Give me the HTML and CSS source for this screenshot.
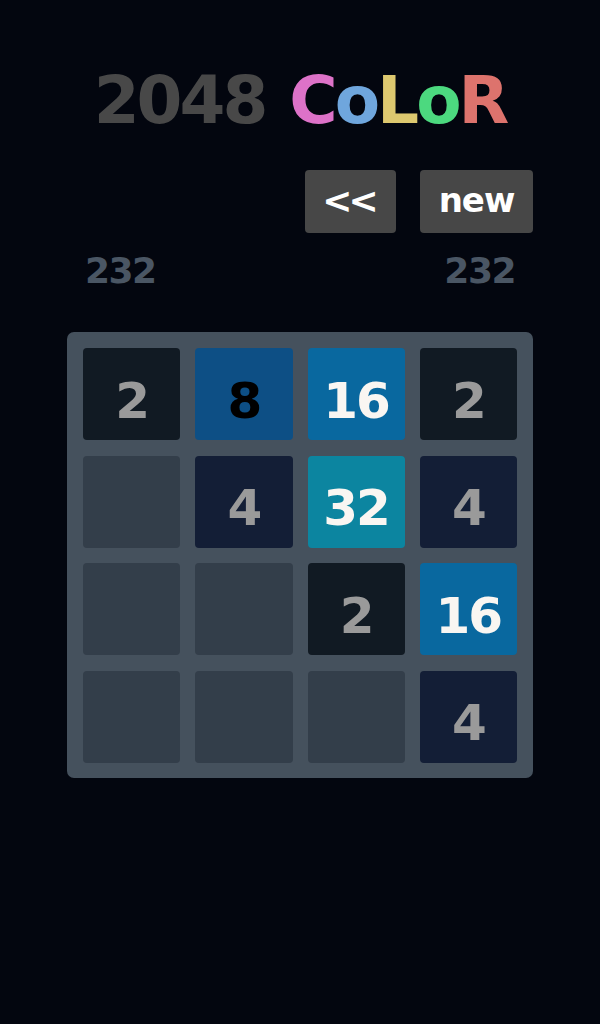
FILE: index.html
```html
<!DOCTYPE html>
<html lang="en">
<head>
<meta charset="utf-8">
<title>2048 CoLoR</title>
<link rel="stylesheet" href="styles.css">
</head>
<body>
<main class="game">
  <h1 class="title"><span class="num">2048</span> <span class="c1">C</span><span class="c2">o</span><span class="c3">L</span><span class="c4">o</span><span class="c5">R</span></h1>
  <div class="controls">
    <button class="btn btn-undo">&lt;&lt;</button>
    <button class="btn btn-new">new</button>
  </div>
  <div class="scores">
    <span class="score">232</span>
    <span class="score">232</span>
  </div>
  <div class="board">
    <div class="tile t2">2</div>
    <div class="tile t8">8</div>
    <div class="tile t16">16</div>
    <div class="tile t2">2</div>

    <div class="tile empty"></div>
    <div class="tile t4">4</div>
    <div class="tile t32">32</div>
    <div class="tile t4">4</div>

    <div class="tile empty"></div>
    <div class="tile empty"></div>
    <div class="tile t2">2</div>
    <div class="tile t16">16</div>

    <div class="tile empty"></div>
    <div class="tile empty"></div>
    <div class="tile empty"></div>
    <div class="tile t4">4</div>
  </div>
</main>
</body>
</html>
```
FILE: styles.css
```css
html, body {
  margin: 0;
  padding: 0;
  background: #03060f;
  height: 100%;
}

body {
  font-family: "DejaVu Sans", "Open Sans", sans-serif;
  font-weight: 700;
}

.game {
  width: 466px;
  margin: 0 auto;
  padding-top: 60px;
}

.title {
  margin: 0;
  text-align: center;
  font-size: 66px;
  line-height: 82px;
  font-weight: 700;
  letter-spacing: -3px;
  white-space: nowrap;
}

.title .num { color: #484848; margin-right: 4px; }
.title .c1 { color: #dd72c8; }
.title .c2 { color: #6fa6dd; }
.title .c3 { color: #ddc86f; }
.title .c4 { color: #4cd97f; }
.title .c5 { color: #dd736d; }

.controls {
  display: flex;
  justify-content: flex-end;
  gap: 24px;
  margin-top: 28px;
}

.btn {
  height: 63px;
  border: none;
  border-radius: 4px;
  background: #474747;
  color: #ffffff;
  font-family: "DejaVu Sans", "Open Sans", sans-serif;
  font-weight: 700;
  font-size: 34px;
  line-height: 1;
  padding: 0 0 2px;
}

.btn-undo { width: 91px; font-size: 36px; letter-spacing: -4px; padding-right: 4px; }
.btn-new { width: 113px; letter-spacing: -1px; padding-bottom: 4px; }

.scores {
  display: flex;
  justify-content: space-between;
  padding: 0 18px;
  margin-top: 14px;
}

.score {
  color: #4a5664;
  font-size: 36px;
  line-height: 48px;
  letter-spacing: -1.5px;
}

.board {
  margin-top: 37px;
  background: #45515d;
  border-radius: 7px;
  padding: 16px 16px 15px;
  display: grid;
  grid-template-columns: repeat(4, 1fr);
  grid-auto-rows: 92px;
  column-gap: 15px;
  row-gap: 15.67px;
}

.tile {
  border-radius: 4px;
  display: flex;
  align-items: center;
  justify-content: center;
  font-size: 50px;
  line-height: 1;
  padding-top: 13px;
  letter-spacing: -2px;
}

.empty { background: #333e4a; }
.t2 { background: #111a23; color: #9a9a9a; }
.t4 { background: #131e36; color: #9a9a9a; }
.t8 { background: #0d4f85; color: #000000; }
.t16 { background: #09689f; color: #f9f6f2; }
.t32 { background: #0c85a0; color: #f9f6f2; }
```
